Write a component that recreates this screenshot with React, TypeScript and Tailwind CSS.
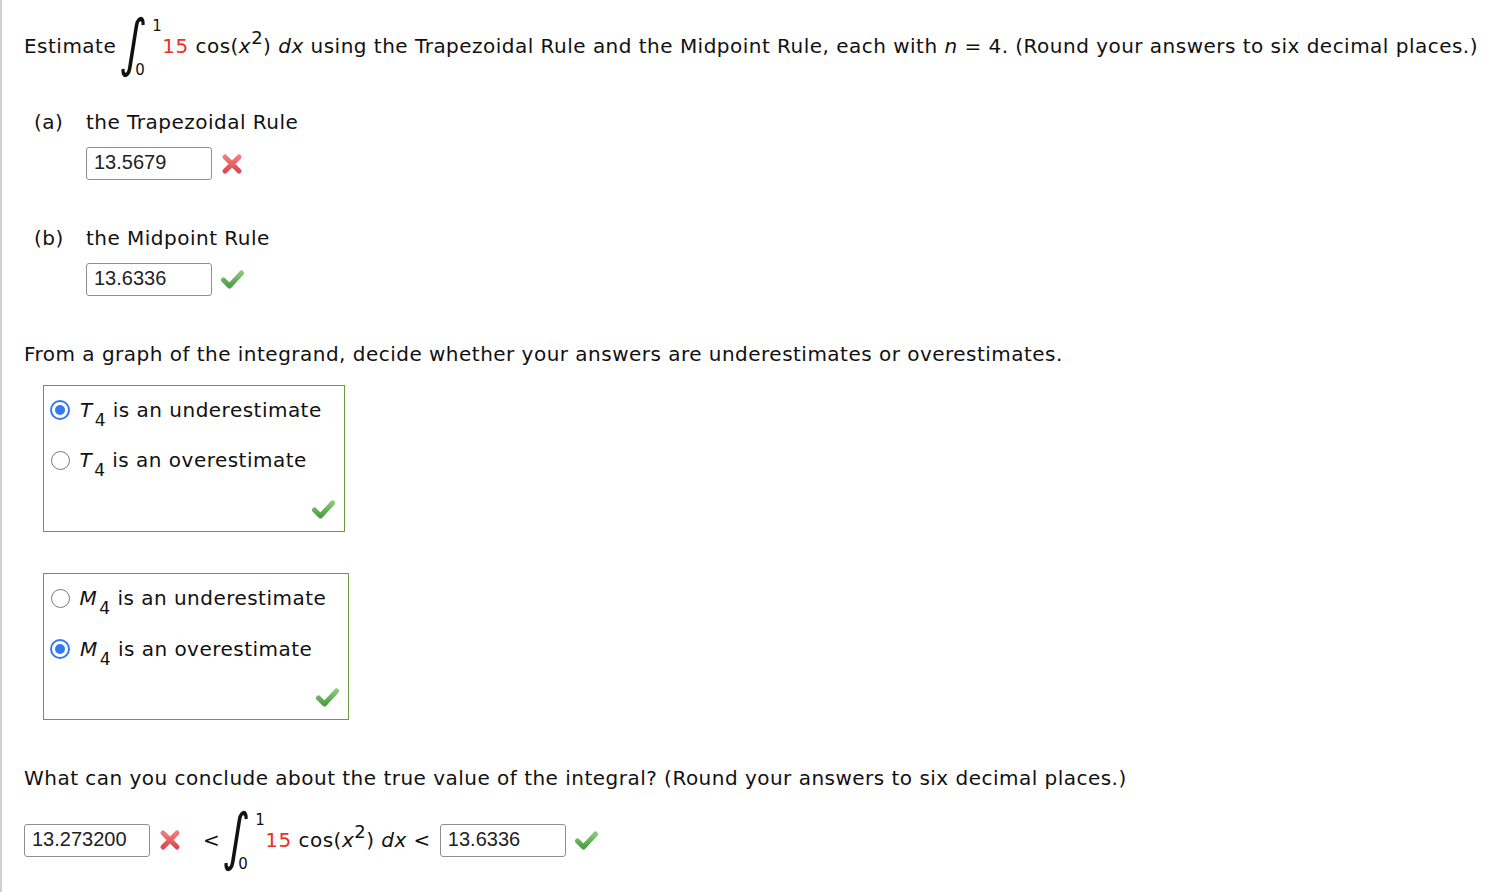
import React from 'react';

const red = 'text-[#e8321f]';

function Integral({ className = '' }: { className?: string }) {
    return (
        <span className={`relative inline-block w-[42px] h-[60px] shrink-0 ${className}`}>
            <span className="absolute left-[6px] top-[-5px] font-['DejaVu_Sans',sans-serif] text-[44px] leading-none tracking-normal scale-y-[1.42] -skew-x-[10deg] origin-top">∫</span>
            <span className="absolute left-[32px] top-[3px] text-[15px] leading-none">1</span>
            <span className="absolute left-[15px] bottom-[-2px] text-[15px] leading-none">0</span>
        </span>
    );
}

function Expr() {
    return (
        <span>
            <span className={red}>15</span> cos(<i>x</i>
            <sup className="text-[18px] top-[-0.5em]">2</sup>) <i>dx</i>
        </span>
    );
}

const Cross = () => (
    <svg width="22" height="22" viewBox="0 0 22 22" className="shrink-0">
        <defs>
            <linearGradient id="rg" x1="0" y1="0" x2="0" y2="1">
                <stop offset="0" stopColor="#f07a7d" />
                <stop offset="1" stopColor="#de4a50" />
            </linearGradient>
        </defs>
        <path d="M4 4 L18 18 M18 4 L4 18" stroke="url(#rg)" strokeWidth="5" strokeLinecap="round" fill="none" />
    </svg>
);

const Check = () => (
    <svg width="25" height="21" viewBox="0 0 25 21" className="shrink-0">
        <defs>
            <linearGradient id="gg" x1="0" y1="0" x2="0" y2="1">
                <stop offset="0" stopColor="#86c878" />
                <stop offset="1" stopColor="#4f9e45" />
            </linearGradient>
        </defs>
        <path d="M3.5 11 L9.5 17 L21.5 4" stroke="url(#gg)" strokeWidth="5" strokeLinecap="round" strokeLinejoin="round" fill="none" />
    </svg>
);

const Answer = ({ value }: { value: string }) => (
    <input
        readOnly
        value={value}
        className="w-[126px] h-[33px] border border-[#8f8f8f] rounded-[3px] px-[7px] pb-[2px] font-['Liberation_Sans',Arial,sans-serif] text-[20px] tracking-normal text-[#222] bg-white outline-none"
    />
);

const Radio = ({ checked }: { checked?: boolean }) =>
    checked ? (
        <span className="w-[20px] h-[20px] rounded-full border-[2px] border-[#3478f6] flex items-center justify-center shrink-0">
            <span className="w-[10px] h-[10px] rounded-full bg-[#3478f6]" />
        </span>
    ) : (
        <span className="w-[19px] h-[19px] rounded-full border border-[#7a7a7a] shrink-0 ml-[0.5px]" />
    );

function Option({ letter, text, checked }: { letter: string; text: string; checked?: boolean }) {
    return (
        <div className="flex items-center h-[24px]">
            <Radio checked={checked} />
            <span className="ml-[10px] whitespace-nowrap">
                <i>{letter}</i>
                <sub className="text-[17px] bottom-[-0.5em] ml-[2px]">4</sub> is an {text}
            </span>
        </div>
    );
}

function ChoiceBox({ letter, first, width, gap }: { letter: string; first: boolean; width: string; gap: string }) {
    return (
        <div className={`ml-[19px] h-[147px] border border-[#6b9a3f] pl-[6px] pt-[12px] flex flex-col ${width}`}>
            <Option letter={letter} text="underestimate" checked={first} />
            <div className={gap} />
            <Option letter={letter} text="overestimate" checked={!first} />
            <div className="flex-1" />
            <div className="flex justify-end pr-[8px] pb-[11px]">
                <Check />
            </div>
        </div>
    );
}

export default function App() {
    return (
        <div className="min-h-[892px] border-l-2 border-[#cfcfcf] pl-[22px] pt-[16px] bg-white text-[#111] font-['DejaVu_Sans',Verdana,sans-serif] text-[20px] leading-[24px] tracking-[0.48px]">
            <div className="flex items-center h-[60px] whitespace-nowrap">
                <span>Estimate</span>
                <Integral className="ml-[4px]" />
                <span>
                    <Expr /> using the Trapezoidal Rule and the Midpoint Rule, each with <i>n</i> = 4. (Round your answers to
                    six decimal places.)
                </span>
            </div>

            <div className="mt-[34px] flex pl-[10px]">
                <span className="w-[52px]">(a)</span>
                <span>the Trapezoidal Rule</span>
            </div>
            <div className="mt-[13px] ml-[62px] flex items-center gap-[9px]">
                <Answer value="13.5679" />
                <Cross />
            </div>

            <div className="mt-[46px] flex pl-[10px]">
                <span className="w-[52px]">(b)</span>
                <span>the Midpoint Rule</span>
            </div>
            <div className="mt-[13px] ml-[62px] flex items-center gap-[8px]">
                <Answer value="13.6336" />
                <Check />
            </div>

            <div className="mt-[46px]">From a graph of the integrand, decide whether your answers are underestimates or overestimates.</div>

            <div className="mt-[19px]">
                <ChoiceBox letter="T" first={true} width="w-[302px]" gap="h-[26px]" />
            </div>
            <div className="mt-[41px]">
                <ChoiceBox letter="M" first={false} width="w-[306px]" gap="h-[27px]" />
            </div>

            <div className="mt-[46px]">What can you conclude about the true value of the integral? (Round your answers to six decimal places.)</div>

            <div className="mt-[20px] flex items-center h-[60px] whitespace-nowrap">
                <Answer value="13.273200" />
                <span className="ml-[9px]">
                    <Cross />
                </span>
                <span className="ml-[22px]">&lt;</span>
                <Integral className="ml-[3px]" />
                <span>
                    <Expr /> &lt;
                </span>
                <span className="ml-[9px] flex items-center gap-[8px]">
                    <Answer value="13.6336" />
                    <Check />
                </span>
            </div>
        </div>
    );
}
